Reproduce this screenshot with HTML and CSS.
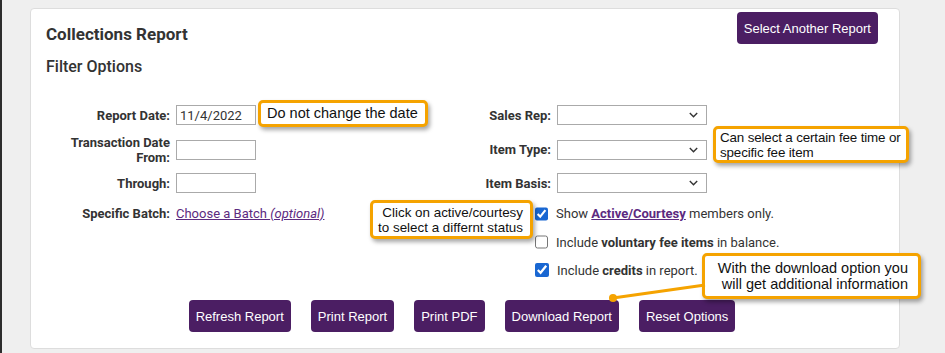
FILE: index.html
```html
<!doctype html>
<html lang="en">
  <head>
    <meta charset="UTF-8" />
    <title>Collections Report</title>
    <link rel="stylesheet" href="styles.css">
  </head>
  <body>
    <div class="card">
      <div class="header">
        <div class="titles">
          <h1>Collections Report</h1>
          <h2>Filter Options</h2>
        </div>
        <button class="btn">Select Another Report</button>
      </div>

      <div class="form">
        <label class="lbl">Report Date:</label>
        <div class="field"><input type="text" class="date" value="11/4/2022" /></div>
        <label class="lbl">Sales Rep:</label>
        <div class="field"><select><option></option></select></div>

        <label class="lbl two">Transaction Date From:</label>
        <div class="field"><input type="text" class="date" /></div>
        <label class="lbl">Item Type:</label>
        <div class="field"><select><option></option></select></div>

        <label class="lbl">Through:</label>
        <div class="field"><input type="text" class="date" /></div>
        <label class="lbl">Item Basis:</label>
        <div class="field"><select><option></option></select></div>

        <label class="lbl">Specific Batch:</label>
        <div class="field"><a href="#" class="link">Choose a Batch <em>(optional)</em></a></div>
        <div class="check">
          <input type="checkbox" checked />
          <span>Show <a href="#" class="link strong">Active/Courtesy</a> members only.</span>
        </div>

        <div class="check row5">
          <input type="checkbox" />
          <span>Include <b>voluntary fee items</b> in balance.</span>
        </div>

        <div class="check row6">
          <input type="checkbox" checked />
          <span>Include <b>credits</b> in report.</span>
        </div>
      </div>

      <div class="actions">
        <button class="btn">Refresh Report</button>
        <button class="btn">Print Report</button>
        <button class="btn">Print PDF</button>
        <button class="btn">Download Report</button>
        <button class="btn">Reset Options</button>
      </div>

      <!-- help callouts laid over the form -->
      <div class="callout c-date">Do not change the date</div>
      <div class="callout c-type">Can select a certain fee time or<br>specific fee item</div>
      <div class="callout c-status">Click on active/courtesy<br>to select a differnt status</div>
      <div class="callout c-download">With the download option you<br>will get additional information</div>
      <svg class="pointer" width="100" height="30" viewBox="0 0 100 30">
        <line x1="4" y1="19" x2="96" y2="6" stroke="#f5a300" stroke-width="3" />
        <circle cx="4" cy="19" r="4" fill="#f5a300" />
      </svg>
    </div>
  </body>
</html>
```

FILE: styles.css
```css
* {
  box-sizing: border-box;
}

body {
  margin: 0;
  padding: 0;
  background-color: #efefef;
  border-left: 2px solid #2d2d2d;
  min-height: 353px;
  font-family: Roboto, "Liberation Sans", sans-serif;
  font-size: 13px;
  color: #333;
}

.card {
  position: relative;
  margin: 8px 0 0 28px;
  width: 870px;
  height: 341px;
  background-color: #fff;
  border: 1px solid #ddd;
  border-radius: 4px;
  padding: 3px 21px 16px 15px;
}

.header {
  display: flex;
  justify-content: space-between;
  align-items: flex-start;
}
.titles {
  padding-top: 12px;
}
.titles h1 {
  margin: 0;
  font-size: 17px;
  line-height: 20px;
  font-weight: 700;
}
.titles h2 {
  margin: 13px 0 0 0;
  font-size: 16px;
  line-height: 20px;
  font-weight: 500;
}

.btn {
  font-family: "Liberation Sans", Arial, sans-serif;
  font-size: 13px;
  height: 32px;
  padding: 0 7px;
  border: none;
  border-radius: 4px;
  background-color: #4b1e63;
  color: #fff;
}

.form {
  display: grid;
  grid-template-columns: 124px 259px 110px 150px;
  grid-template-rows: 34px 35px 32px 29px 28px 28px;
  column-gap: 6px;
  align-items: center;
  margin-top: 21px;
}
.lbl {
  text-align: right;
  font-weight: 700;
}
.lbl.two {
  line-height: 15px;
}
.field {
  display: flex;
  align-items: center;
}

.date {
  width: 80px;
  height: 20px;
  border: 1px solid #aaa;
  padding: 1px 3px;
  font-family: Roboto, sans-serif;
  font-size: 13px;
  color: #333;
}
select {
  appearance: none;
  width: 150px;
  height: 20px;
  border: 1px solid #aaa;
  border-radius: 0;
  background: #fff url("data:image/svg+xml,%3Csvg xmlns='http://www.w3.org/2000/svg' width='9' height='6' viewBox='0 0 9 6'%3E%3Cpath d='M0.8 1 L4.5 4.7 L8.2 1' fill='none' stroke='%23333' stroke-width='1.4'/%3E%3C/svg%3E") no-repeat right 8px center;
}

.link {
  color: #5c2a80;
  text-decoration: underline;
}
.link.strong {
  font-weight: 700;
}

.check {
  grid-column: 3 / 5;
  display: flex;
  align-items: center;
  gap: 8px;
  padding-left: 94px;
  white-space: nowrap;
}
.check.row5 {
  grid-row: 5;
}
.check.row6 {
  grid-row: 6;
}
.check input {
  margin: 0;
  width: 14px;
  height: 14px;
  accent-color: #1967d2;
}

.actions {
  display: flex;
  justify-content: center;
  gap: 20px;
  margin-top: 16px;
}

.callout {
  position: absolute;
  background-color: #fff;
  border: 3px solid #f5a300;
  border-radius: 5px;
  box-shadow: 2px 3px 4px rgba(0, 0, 0, 0.35);
  font-family: "Liberation Sans", Arial, sans-serif;
  font-size: 14px;
  line-height: 16px;
  color: #111;
  white-space: nowrap;
}
.c-date {
  left: 227px;
  top: 91px;
  width: 170px;
  height: 27px;
  padding: 2px 0 0 6px;
  font-size: 14.5px;
}
.c-type {
  left: 682px;
  top: 117px;
  width: 196px;
  height: 37px;
  padding: 1px 0 0 4px;
  font-size: 13.4px;
  letter-spacing: -0.15px;
  line-height: 15px;
}
.c-status {
  left: 339px;
  top: 191px;
  width: 163px;
  height: 39px;
  padding: 2px 7px 0 0;
  font-size: 13.4px;
  line-height: 15px;
  text-align: right;
}
.c-download {
  left: 671px;
  top: 244px;
  width: 219px;
  height: 46px;
  padding: 4px 10px 0 0;
  font-size: 14.5px;
  text-align: right;
}
.pointer {
  position: absolute;
  left: 578px;
  top: 270px;
}
```
